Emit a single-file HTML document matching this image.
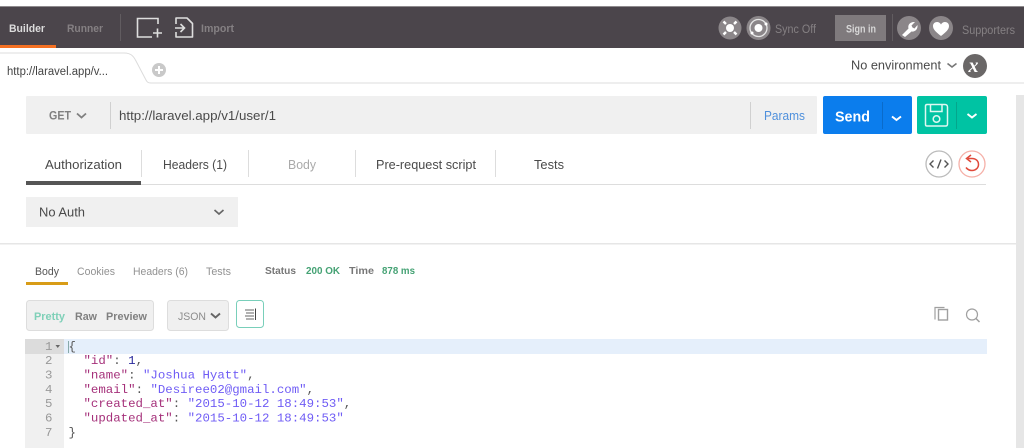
<!DOCTYPE html>
<html><head><meta charset="utf-8"><style>
html,body{margin:0;padding:0;background:#fff;width:1024px;height:448px;overflow:hidden}
svg{display:block;filter:blur(.3px)}
text{font-family:"Liberation Sans",sans-serif}
.c text{font-family:"Liberation Mono",monospace;font-size:12.4px}
.k{fill:#a5307a}.s{fill:#6f5cf5}.p{fill:#555}.n{fill:#999}
</style></head><body>
<svg width="1024" height="448" viewBox="0 0 1024 448" xmlns="http://www.w3.org/2000/svg" fill="none">
<rect width="1024" height="448" fill="#fff"/>
<!-- top bar -->
<rect y="6" width="1024" height="42" fill="#4b454b"/>
<rect y="6" width="1024" height="1" fill="#8f8b8e"/>
<rect y="45" width="56" height="3" fill="#f47023"/>
<text x="9" y="32" font-size="11" font-weight="700" fill="#dcdcdc" textLength="36" lengthAdjust="spacingAndGlyphs">Builder</text>
<text x="67" y="32" font-size="11" font-weight="700" fill="#858083" textLength="36" lengthAdjust="spacingAndGlyphs">Runner</text>
<rect x="120" y="14" width="1" height="27" fill="#615c60"/>
<path d="M158 24V18.5H137.5V37H152" stroke="#dedede" stroke-width="1.6"/>
<path d="M153 33H162M157.5 28.5V37.5" stroke="#dedede" stroke-width="1.6"/>
<path d="M176 24V18H187L192.5 23.5V37H176V32" stroke="#dedede" stroke-width="1.6" stroke-linejoin="round"/>
<path d="M175 28H184M180.5 24L184.5 28L180.5 32" stroke="#dedede" stroke-width="1.6"/>
<text x="201" y="32" font-size="11" font-weight="700" fill="#858083" textLength="33" lengthAdjust="spacingAndGlyphs">Import</text>
<circle cx="730" cy="28" r="11.5" fill="#8b8689"/>
<circle cx="730" cy="28" r="4" fill="#fff"/>
<path d="M723.5 21.5L726 24M736.5 21.5L734 24M723.5 34.5L726 32M736.5 34.5L734 32" stroke="#fff" stroke-width="2.4"/>
<circle cx="758.5" cy="28" r="12" fill="#8b8689"/>
<circle cx="758.5" cy="28" r="8.5" stroke="#e6e6e6" stroke-width="1.3"/>
<circle cx="758.5" cy="28" r="4" fill="#fff"/>
<circle cx="766" cy="24" r="1.5" fill="#fff"/><circle cx="752" cy="33" r="1.5" fill="#fff"/>
<text x="775" y="33" font-size="11.5" fill="#858083" textLength="41" lengthAdjust="spacingAndGlyphs">Sync Off</text>
<rect x="835" y="15" width="51" height="26" fill="#7f7a7d"/>
<text x="846" y="32.5" font-size="11" font-weight="700" fill="#d8d8d8" textLength="30" lengthAdjust="spacingAndGlyphs">Sign in</text>
<rect x="892" y="14" width="1" height="27" fill="#615c60"/>
<circle cx="909" cy="28" r="12" fill="#8b8689"/>
<path d="M902 35L908.5 28.5C907.5 25 910 21.5 915 22L911.5 25.5L912.5 27.5L914.5 28.5L917.5 25C918 30 914.5 32 911.5 31.5L905 37Z" fill="#fff"/>
<circle cx="941" cy="28" r="12" fill="#8b8689"/>
<path d="M941 36C936 32 933 29.5 933 26C933 21.5 939 20.5 941 24.5C943 20.5 949 21.5 949 26C949 29.5 946 32 941 36Z" fill="#fff"/>
<text x="962" y="34" font-size="11.5" fill="#858083" textLength="53" lengthAdjust="spacingAndGlyphs">Supporters</text>
<!-- tab row -->
<path d="M0 53H124C130 53 133 55 136 61L146 80C147 82 148 83 151 83H1024" stroke="#dcdcdc" stroke-width="1"/>
<text x="7" y="75" font-size="11.5" fill="#444" textLength="101" lengthAdjust="spacingAndGlyphs">http://laravel.app/v...</text>
<circle cx="159" cy="70" r="7" fill="#c9c9c9"/>
<path d="M155 70H163M159 66V74" stroke="#fff" stroke-width="2"/>
<text x="851" y="69.5" font-size="12.5" fill="#4a4a4a" textLength="90" lengthAdjust="spacingAndGlyphs">No environment</text>
<path d="M947.5 63.5L952 67L956.5 63.5" stroke="#777" stroke-width="1.6"/>
<circle cx="975" cy="66" r="12" fill="#6a6767"/>
<text x="968.5" y="72" style="font-family:'Liberation Serif',serif" font-size="20" font-weight="700" font-style="italic" fill="#fff">x</text>
<rect x="1016" y="95" width="8" height="353" fill="#e6e6e6"/>
<!-- url bar -->
<rect x="26" y="96" width="791" height="38" rx="1" fill="#f0f0f0"/>
<text x="49" y="119.5" font-size="11.5" font-weight="700" fill="#808080" textLength="22" lengthAdjust="spacingAndGlyphs">GET</text>
<path d="M77 113.5L81.5 117.5L86 113.5" stroke="#808080" stroke-width="1.8"/>
<rect x="110" y="102" width="1" height="27" fill="#d0d0d0"/>
<text x="119" y="120" font-size="12.5" fill="#4a4a4a" textLength="157" lengthAdjust="spacingAndGlyphs">http://laravel.app/v1/user/1</text>
<rect x="750" y="102" width="1" height="27" fill="#d0d0d0"/>
<text x="764" y="120" font-size="12.5" fill="#4f90dc" textLength="41" lengthAdjust="spacingAndGlyphs">Params</text>
<rect x="823" y="96" width="89" height="38" rx="2" fill="#0b7ded"/>
<text x="835" y="121.5" font-size="15" font-weight="700" fill="#fff" textLength="35" lengthAdjust="spacingAndGlyphs">Send</text>
<rect x="882" y="102" width="1" height="27" fill="#0a6bca"/>
<path d="M892 116.5L896.5 120L901 116.5" stroke="#fff" stroke-width="1.9"/>
<rect x="917" y="96" width="70" height="38" rx="2" fill="#00c3a3"/>
<path d="M925.5 106C925.5 105 926 104.5 927 104.5H945C946.5 104.5 947.5 105.5 947.5 107V124C947.5 125.5 947 126 945.5 126H927C926 126 925.5 125.5 925.5 124.5Z" stroke="#dff8f2" stroke-width="1.5"/>
<path d="M930.5 105V111.5H942V105" stroke="#dff8f2" stroke-width="1.5"/>
<circle cx="936.5" cy="119" r="3.3" stroke="#dff8f2" stroke-width="1.5"/>
<rect x="956" y="102" width="1" height="27" fill="#04a68c"/>
<path d="M967.5 114L972 117.5L976.5 114" stroke="#fff" stroke-width="1.9"/>
<!-- request tabs -->
<text x="45" y="169" font-size="12.5" fill="#4a4a4a" textLength="77" lengthAdjust="spacingAndGlyphs">Authorization</text>
<rect x="141" y="150" width="1" height="27" fill="#ddd"/>
<text x="163" y="169" font-size="12.5" fill="#4a4a4a" textLength="64" lengthAdjust="spacingAndGlyphs">Headers (1)</text>
<rect x="248" y="150" width="1" height="27" fill="#ddd"/>
<text x="288" y="169" font-size="12.5" fill="#aaa" textLength="28" lengthAdjust="spacingAndGlyphs">Body</text>
<rect x="355" y="150" width="1" height="27" fill="#ddd"/>
<text x="376" y="169" font-size="12.5" fill="#4a4a4a" textLength="100" lengthAdjust="spacingAndGlyphs">Pre-request script</text>
<rect x="495" y="150" width="1" height="27" fill="#ddd"/>
<text x="534" y="169" font-size="12.5" fill="#4a4a4a" textLength="30" lengthAdjust="spacingAndGlyphs">Tests</text>
<rect x="26" y="184" width="960" height="1" fill="#ddd"/>
<rect x="26" y="181" width="115" height="4" fill="#555"/>
<circle cx="939" cy="164" r="13" fill="#fff" stroke="#bbb" stroke-width="1.3"/>
<path d="M933.5 160.5L930 164L933.5 167.5M944.5 160.5L948 164L944.5 167.5M941 159.5L937.5 168.5" stroke="#555" stroke-width="1.4"/>
<circle cx="972" cy="164" r="13" fill="#fff" stroke="#f5b0a8" stroke-width="1.3"/>
<path d="M968 158.5H972C976 158.5 978.5 161 978.5 164.5C978.5 168 975.5 170.5 972 170.5C969.5 170.5 967.5 169.5 966 167.5" stroke="#e0493a" stroke-width="1.5"/>
<path d="M971 155L966.5 158.5L971 162" stroke="#e0493a" stroke-width="1.5"/>
<!-- auth -->
<rect x="26" y="197" width="212" height="30" fill="#f0f0f0"/>
<text x="39" y="216.5" font-size="12.5" fill="#4a4a4a" textLength="46" lengthAdjust="spacingAndGlyphs">No Auth</text>
<path d="M214.5 210L219 214L223.5 210" stroke="#666" stroke-width="1.7"/>
<rect y="243" width="1016" height="1.5" fill="#e6e6e6"/>
<!-- response tabs -->
<text x="35" y="275" font-size="11" fill="#555" textLength="24" lengthAdjust="spacingAndGlyphs">Body</text>
<rect x="26" y="282" width="42" height="3" fill="#d89c17"/>
<text x="77" y="275" font-size="11" fill="#929292" textLength="38" lengthAdjust="spacingAndGlyphs">Cookies</text>
<text x="133" y="275" font-size="11" fill="#929292" textLength="55" lengthAdjust="spacingAndGlyphs">Headers (6)</text>
<text x="206" y="275" font-size="11" fill="#929292" textLength="25" lengthAdjust="spacingAndGlyphs">Tests</text>
<text x="265" y="274" font-size="10.5" font-weight="700" fill="#777" textLength="31" lengthAdjust="spacingAndGlyphs">Status</text>
<text x="306" y="274" font-size="10.5" font-weight="700" fill="#45a274" textLength="34" lengthAdjust="spacingAndGlyphs">200 OK</text>
<text x="349" y="274" font-size="10.5" font-weight="700" fill="#777" textLength="25" lengthAdjust="spacingAndGlyphs">Time</text>
<text x="382" y="274" font-size="10.5" font-weight="700" fill="#45a274" textLength="33" lengthAdjust="spacingAndGlyphs">878 ms</text>
<!-- response controls -->
<rect x="26.5" y="300.5" width="127" height="30" rx="3" fill="#f0f0f0" stroke="#ddd"/>
<text x="34" y="320" font-size="11" font-weight="700" fill="#7fd0b8" textLength="31" lengthAdjust="spacingAndGlyphs">Pretty</text>
<text x="75" y="320" font-size="11" font-weight="700" fill="#808080" textLength="22" lengthAdjust="spacingAndGlyphs">Raw</text>
<text x="106" y="320" font-size="11" font-weight="700" fill="#808080" textLength="41" lengthAdjust="spacingAndGlyphs">Preview</text>
<rect x="167.5" y="300.5" width="61" height="30" rx="3" fill="#f0f0f0" stroke="#ddd"/>
<text x="178" y="320" font-size="11" fill="#8c8c8c" textLength="28" lengthAdjust="spacingAndGlyphs">JSON</text>
<path d="M211 313.5L215.5 317.5L220 313.5" stroke="#666" stroke-width="1.9"/>
<rect x="236.5" y="300.5" width="27" height="27" rx="3" fill="#fff" stroke="#79cfba"/>
<path d="M245 310H254M246 313H254M245 316H254M246 319H254" stroke="#666"/>
<path d="M255.5 308.5V320" stroke="#444"/>
<path d="M935 319.5V307.5H944.5" stroke="#a0a0a0" stroke-width="1.2"/>
<rect x="938.5" y="309.5" width="9" height="10.5" fill="#fff" stroke="#a0a0a0" stroke-width="1.4"/>
<circle cx="972" cy="314.5" r="5.5" stroke="#a0a0a0" stroke-width="1.2"/>
<path d="M976 318.5L979.5 322" stroke="#a0a0a0" stroke-width="1.5"/>
<!-- code -->
<rect x="25" y="339" width="39" height="109" fill="#f0f0f0"/>
<rect x="25" y="339" width="39" height="15" fill="#dcdcdc"/>
<rect x="64" y="339" width="923" height="15" fill="#e5effb"/>
<path d="M55.5 345H60L57.75 348Z" fill="#666"/>
<rect x="68" y="341" width="1" height="12" fill="#8aa"/>
<g class="c">
<text class="n" x="45" y="350">1</text>
<text class="n" x="45" y="364">2</text>
<text class="n" x="45" y="378.5">3</text>
<text class="n" x="45" y="393">4</text>
<text class="n" x="45" y="407">5</text>
<text class="n" x="45" y="421.5">6</text>
<text class="n" x="45" y="436">7</text>
<text class="p" x="68.5" y="350">{</text>
<text x="83.5" y="364" xml:space="preserve"><tspan class="k">"id"</tspan><tspan class="p">: </tspan><tspan fill="#2a2a9c">1</tspan><tspan class="p">,</tspan></text>
<text x="83.5" y="378.5" xml:space="preserve"><tspan class="k">"name"</tspan><tspan class="p">: </tspan><tspan class="s">"Joshua Hyatt"</tspan><tspan class="p">,</tspan></text>
<text x="83.5" y="393" xml:space="preserve"><tspan class="k">"email"</tspan><tspan class="p">: </tspan><tspan class="s">"Desiree02@gmail.com"</tspan><tspan class="p">,</tspan></text>
<text x="83.5" y="407" xml:space="preserve"><tspan class="k">"created_at"</tspan><tspan class="p">: </tspan><tspan class="s">"2015-10-12 18:49:53"</tspan><tspan class="p">,</tspan></text>
<text x="83.5" y="421.5" xml:space="preserve"><tspan class="k">"updated_at"</tspan><tspan class="p">: </tspan><tspan class="s">"2015-10-12 18:49:53"</tspan></text>
<text class="p" x="68.5" y="436">}</text>
</g>
</svg>
</body></html>
